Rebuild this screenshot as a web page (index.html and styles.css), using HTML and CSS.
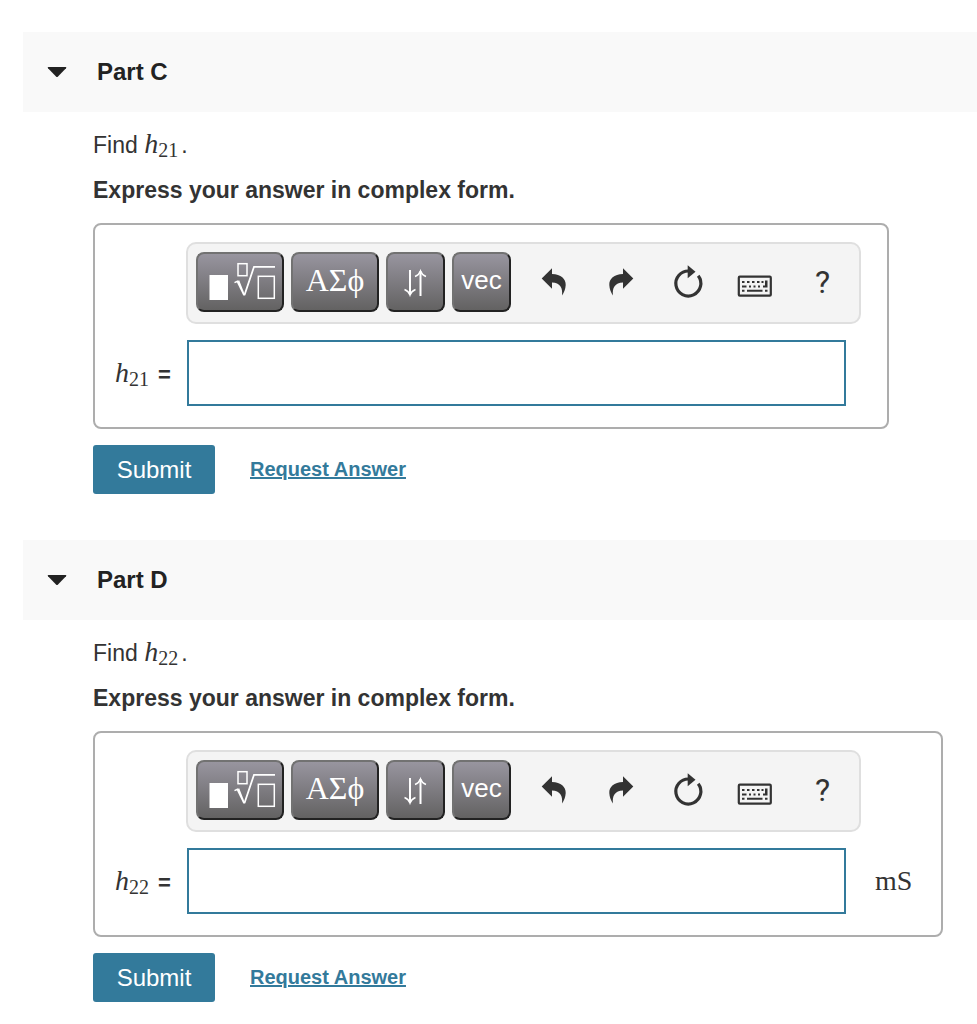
FILE: index.html
```
<!DOCTYPE html>
<html lang="en">
    <head>
        <title>Part C and Part D</title>
        <meta charset="utf-8">
        <link rel="stylesheet" href="styles.css">
    </head>
    <body>
        <!-- icons shared by both toolbars -->
        <svg class="sprite" aria-hidden="true">
            <symbol id="caret" viewBox="0 0 20 12"><path d="M1.5 1H18.5Q20 1 19 2.2L11 10.5Q10 11.5 9 10.5L1 2.2Q0 1 1.5 1Z" fill="currentColor"/></symbol>
            <symbol id="root" viewBox="2 2 84 56">
                <rect x="13.5" y="23" width="18.5" height="25" fill="#fff"/>
                <g fill="none" stroke="#fff" stroke-width="1.5">
                    <rect x="42" y="11.7" width="9" height="12"/>
                    <rect x="62.3" y="24.3" width="16" height="22"/>
                    <path d="M38.5 30.7L42 29"/>
                    <path d="M48.5 43L58 14.8H79" stroke-width="1.8"/>
                </g>
                <path d="M40.5 29.4L43.2 28.2L49.2 43.5H47.3Z" fill="#fff"/>
            </symbol>
            <symbol id="updown" viewBox="2 2 55 56">
                <g fill="none" stroke="#fff" stroke-width="2">
                    <path d="M24 18V42.5M34.5 19V44"/>
                    <path d="M18.5 37.5Q22.5 39 24 43Q25.5 39 29.5 37.5" stroke-width="1.5"/>
                    <path d="M29 24.5Q33 23 34.5 19Q36 23 40 24.5" stroke-width="1.5"/>
                </g>
            </symbol>
            <symbol id="undo" viewBox="0 0 67 60"><path d="M20.7 26.5L31 16.2V22C40 22 45 27 44.7 33C44.5 37 43 41 41 43.5C42 36 39 30.5 31 30.5V36.8Z" fill="#333"/></symbol>
            <symbol id="redo" viewBox="0 0 67 60"><path d="M45.3 26.5L35 16.2V22C26 22 21 27 21.3 33C21.5 37 23 41 25 43.5C24 36 27 30.5 35 30.5V36.8Z" fill="#333"/></symbol>
            <symbol id="reset" viewBox="0 0 67 60">
                <path d="M43.2 23.8A12.5 12.5 0 1 1 34 19" fill="none" stroke="#333" stroke-width="3.2"/>
                <path d="M32.7 13.2L40.5 19.7L32.7 26.2Z" fill="#333"/>
            </symbol>
            <symbol id="keyboard" viewBox="0 0 67 60">
                <rect x="16.8" y="24.7" width="32" height="19" rx="1" fill="none" stroke="#333" stroke-width="2.2"/>
                <g fill="#333">
                    <path d="M20 29h2.5v2H20zM25 29h2.5v2H25zM30 29h2.5v2H30zM35 29h2.5v2H35zM39.500 29h2v2h-2z"/>
                    <path d="M43 28.500h2.500v7H41v-2h2z"/>
                    <path d="M20 33.500h4.500v2H20zM27 33.500h2v2h-2zM31.500 33.500h2v2h-2zM36 33.500h2v2h-2z"/>
                    <path d="M20 37.800h2.500v2H20zM25 37.800h15.500v2H25zM43 37.800h2.500v2H43z"/>
                </g>
            </symbol>
        </svg>

        <section class="part">
            <h2 class="part-header"><svg class="caret"><use href="#caret"/></svg>Part C</h2>
            <div class="part-body">
                <p class="question">Find <span class="math">h<sub>21</sub></span>.</p>
                <p class="question hint">Express your answer in complex form.</p>
                <div class="answer-box">
                    <div class="toolbar">
                        <button class="key wide" aria-label="Templates"><svg><use href="#root"/></svg></button>
                        <button class="key wide greek">ΑΣϕ</button>
                        <button class="key" aria-label="Arrows"><svg><use href="#updown"/></svg></button>
                        <button class="key vec">vec</button>
                        <div class="tools">
                            <button class="tool" aria-label="Undo"><svg><use href="#undo"/></svg></button>
                            <button class="tool" aria-label="Redo"><svg><use href="#redo"/></svg></button>
                            <button class="tool" aria-label="Reset"><svg><use href="#reset"/></svg></button>
                            <button class="tool" aria-label="Keyboard shortcuts"><svg><use href="#keyboard"/></svg></button>
                            <button class="tool">?</button>
                        </div>
                    </div>
                    <div class="answer-row">
                        <label for="h21"><span class="math">h<sub>21</sub></span><span class="equals">=</span></label>
                        <input type="text" id="h21">
                    </div>
                </div>
                <div class="actions">
                    <button class="submit">Submit</button>
                    <a class="request" href="#">Request Answer</a>
                </div>
            </div>
        </section>

        <section class="part">
            <h2 class="part-header"><svg class="caret"><use href="#caret"/></svg>Part D</h2>
            <div class="part-body">
                <p class="question">Find <span class="math">h<sub>22</sub></span>.</p>
                <p class="question hint">Express your answer in complex form.</p>
                <div class="answer-box">
                    <div class="toolbar">
                        <button class="key wide" aria-label="Templates"><svg><use href="#root"/></svg></button>
                        <button class="key wide greek">ΑΣϕ</button>
                        <button class="key" aria-label="Arrows"><svg><use href="#updown"/></svg></button>
                        <button class="key vec">vec</button>
                        <div class="tools">
                            <button class="tool" aria-label="Undo"><svg><use href="#undo"/></svg></button>
                            <button class="tool" aria-label="Redo"><svg><use href="#redo"/></svg></button>
                            <button class="tool" aria-label="Reset"><svg><use href="#reset"/></svg></button>
                            <button class="tool" aria-label="Keyboard shortcuts"><svg><use href="#keyboard"/></svg></button>
                            <button class="tool">?</button>
                        </div>
                    </div>
                    <div class="answer-row">
                        <label for="h22"><span class="math">h<sub>22</sub></span><span class="equals">=</span></label>
                        <input type="text" id="h22">
                        <span class="unit">mS</span>
                    </div>
                </div>
                <div class="actions">
                    <button class="submit">Submit</button>
                    <a class="request" href="#">Request Answer</a>
                </div>
            </div>
        </section>
    </body>
</html>
```
FILE: styles.css
```
*{
    box-sizing: border-box;
}
body{
    margin: 0;
    padding: 32px 0 0 23px;
    font-family: "Liberation Sans", Arial, sans-serif;
    font-size: 23px;
    color: #333;
    background-color: #fff;
}
button{
    padding: 0;
    font-family: inherit;
}
.sprite{
    display: none;
}

.part{
    margin-bottom: 46px;
}
.part:last-child{
    margin-bottom: 0;
}
.part-header{
    display: flex;
    align-items: center;
    gap: 30px;
    height: 80px;
    margin: 0;
    padding-left: 24px;
    font-size: 24px;
    color: #222;
    background-color: #f9f9f9;
}
.caret{
    width: 20px;
    height: 12px;
}
.part-body{
    padding: 18px 24px 0 70px;
}
.question{
    margin: 0 0 15px;
    line-height: 30px;
}
.hint{
    margin-bottom: 18px;
    font-weight: bold;
}

/* math text */
.math{
    margin-right: 3px;
    font-family: "Liberation Serif", "Times New Roman", serif;
    font-size: 28px;
    font-style: italic;
    line-height: 1;
}
.math sub{
    font-size: 20px;
    font-style: normal;
    line-height: 0;
    vertical-align: -4px;
}
.equals{
    font-size: 22px;
    font-weight: bold;
    margin-left: 6px;
}

.answer-box{
    width: fit-content;
    max-width: 100%;
    padding: 17px 26px 21px 20px;
    border: 2px solid #adadad;
    border-radius: 8px;
}
.toolbar{
    display: flex;
    gap: 7px;
    width: fit-content;
    margin: 0 0 16px 71px;
    padding: 8px 3px 10px 8px;
    border: 2px solid #dfdfdf;
    border-radius: 10px;
    background-color: #f4f4f4;
}
.key{
    display: flex;
    align-items: center;
    justify-content: center;
    width: 59px;
    height: 60px;
    border: 2px solid;
    border-color: #727272 #222 #222 #727272;
    border-radius: 8px;
    color: #fff;
    background: linear-gradient(#98959f, #636262);
}
.wide{
    width: 88px;
}
.key svg, .tool svg{
    display: block;
    width: 100%;
    height: 100%;
}
.greek{
    padding-bottom: 4px;
    font-family: "Liberation Serif", "Times New Roman", serif;
    font-size: 32px;
}
.vec{
    padding-bottom: 4px;
    font-size: 26px;
}
.tools{
    display: flex;
    margin-left: 3px;
}
.tool{
    width: 67px;
    height: 60px;
    border: 0;
    font-family: Roboto, sans-serif;
    font-size: 32px;
    color: #333;
    background: none;
}

.answer-row{
    display: flex;
    align-items: center;
}
.answer-row label{
    flex: none;
    width: 72px;
}
.answer-row input{
    width: 659px;
    min-width: 0;
    height: 66px;
    padding: 0 12px;
    border: 2px solid #337a9b;
    font-size: 24px;
}
.unit{
    margin: 0 3px 0 29px;
    font-family: "Liberation Serif", "Times New Roman", serif;
    font-size: 28px;
}

.actions{
    display: flex;
    align-items: center;
    gap: 35px;
    margin-top: 16px;
}
.submit{
    width: 122px;
    height: 49px;
    border: 0;
    border-radius: 3px;
    font-size: 24px;
    color: #fff;
    background-color: #337a9b;
}
.request{
    font-size: 20px;
    font-weight: bold;
    color: #337a9b;
    text-decoration-thickness: 2px;
}
```
